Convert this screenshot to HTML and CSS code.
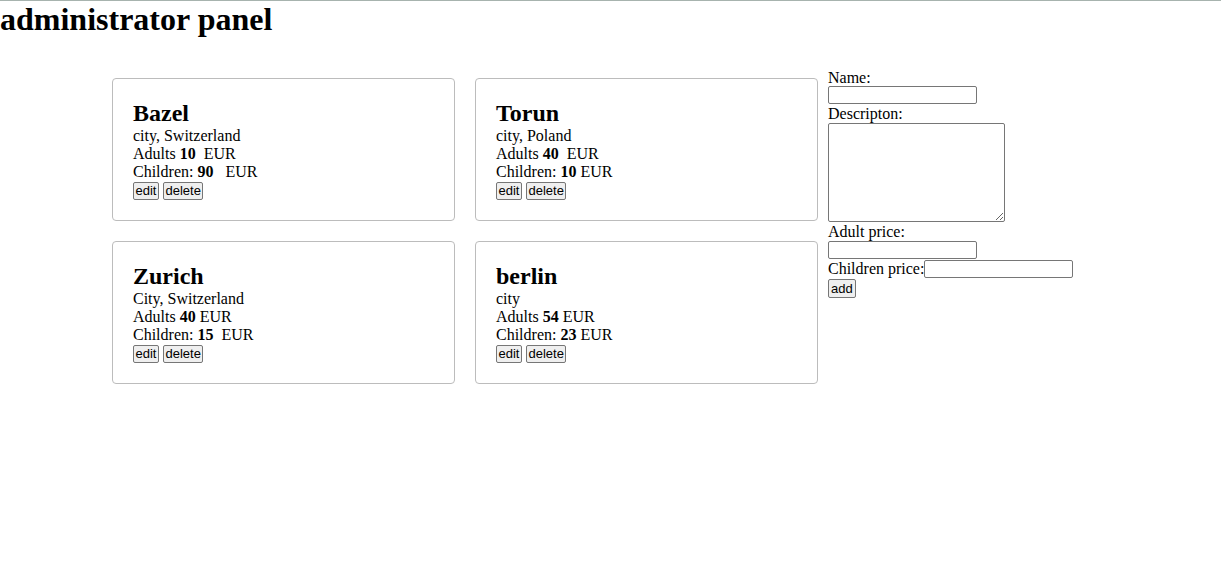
FILE: index.html
```html
<!DOCTYPE html>
<html>
<head>
<meta charset="utf-8">
<title>administrator panel</title>
<link rel="stylesheet" href="styles.css">
</head>
<body>
<h1 class="title">administrator panel</h1>
<div class="layout">
  <div class="cards">
    <div class="card">
      <h2 class="card-name">Bazel</h2>
      <p class="card-line">city, Switzerland</p>
      <p class="card-line">Adults <b>10</b>&nbsp; EUR</p>
      <p class="card-line">Children: <b>90</b> &nbsp; EUR</p>
      <div class="card-actions"><button class="btn">edit</button><button class="btn">delete</button></div>
    </div>
    <div class="card">
      <h2 class="card-name">Torun</h2>
      <p class="card-line">city, Poland</p>
      <p class="card-line">Adults <b>40</b>&nbsp; EUR</p>
      <p class="card-line">Children: <b>10</b> EUR</p>
      <div class="card-actions"><button class="btn">edit</button><button class="btn">delete</button></div>
    </div>
    <div class="card">
      <h2 class="card-name">Zurich</h2>
      <p class="card-line">City, Switzerland</p>
      <p class="card-line">Adults <b>40</b> EUR</p>
      <p class="card-line">Children: <b>15</b>&nbsp; EUR</p>
      <div class="card-actions"><button class="btn">edit</button><button class="btn">delete</button></div>
    </div>
    <div class="card">
      <h2 class="card-name">berlin</h2>
      <p class="card-line">city</p>
      <p class="card-line">Adults <b>54</b> EUR</p>
      <p class="card-line">Children: <b>23</b> EUR</p>
      <div class="card-actions"><button class="btn">edit</button><button class="btn">delete</button></div>
    </div>
  </div>
  <form class="add-form">
    <label class="form-label">Name:</label>
    <input class="field" type="text">
    <label class="form-label">Descripton:</label>
    <textarea class="area"></textarea>
    <label class="form-label">Adult price:</label>
    <input class="field field-gap" type="text">
    <div class="inline-row"><label class="form-label">Children price:</label><input class="field" type="text"></div>
    <div><button class="btn add-btn" type="button">add</button></div>
  </form>
</div>
</body>
</html>
```

FILE: styles.css
```css
html, body {
  margin: 0;
  padding: 0;
  background: #ffffff;
}
body {
  border-top: 1px solid #a7b3ae;
  font-family: "Liberation Serif", "Times New Roman", serif;
  font-size: 16px;
  color: #000;
}
.title {
  margin: 0;
  font-size: 32px;
  line-height: 36px;
  font-weight: bold;
}
.layout {
  display: flex;
  align-items: flex-start;
  margin-top: 31px;
  padding-left: 102px;
}
.cards {
  display: grid;
  grid-template-columns: 343px 343px;
  gap: 20px;
  padding: 10px;
}
.card {
  box-sizing: border-box;
  height: 143px;
  border: 1px solid #bcbcbc;
  border-radius: 4px;
  padding: 21px 20px 19px;
}
.card-name {
  margin: 0;
  font-size: 24px;
  line-height: 26.6px;
  font-weight: bold;
}
.card-line {
  margin: 0;
  line-height: 18.3px;
}
.card-actions {
  display: flex;
  gap: 4px;
  margin-top: 1px;
}
.btn {
  box-sizing: border-box;
  height: 18px;
  margin: 0;
  padding: 0 1.5px;
  font-family: "Liberation Sans", Arial, sans-serif;
  font-size: 13px;
  line-height: 14px;
  color: #000;
  background: #efefef;
  border: 1px solid #767676;
  border-radius: 2px;
}
.add-form {
  display: flex;
  flex-direction: column;
  align-items: flex-start;
}
.form-label {
  display: block;
  line-height: 20px;
  height: 18px;
}
.field {
  box-sizing: border-box;
  display: block;
  width: 149px;
  height: 18px;
  margin: 0;
  padding: 0 2px;
  border: 1px solid #767676;
  border-radius: 2px;
  font-size: 13px;
  background: #fff;
}
.field-gap {
  margin-top: 1px;
}
.area {
  box-sizing: border-box;
  display: block;
  width: 177px;
  height: 99px;
  margin: 1px 0 0 0;
  padding: 2px;
  border: 1px solid #767676;
  border-radius: 2px;
  resize: both;
}
.inline-row {
  display: flex;
  align-items: flex-end;
  height: 19px;
}
.inline-row .form-label {
  line-height: 18px;
}
.add-btn {
  margin-top: 1px;
  height: 19px;
  padding: 0 2px;
}
```
